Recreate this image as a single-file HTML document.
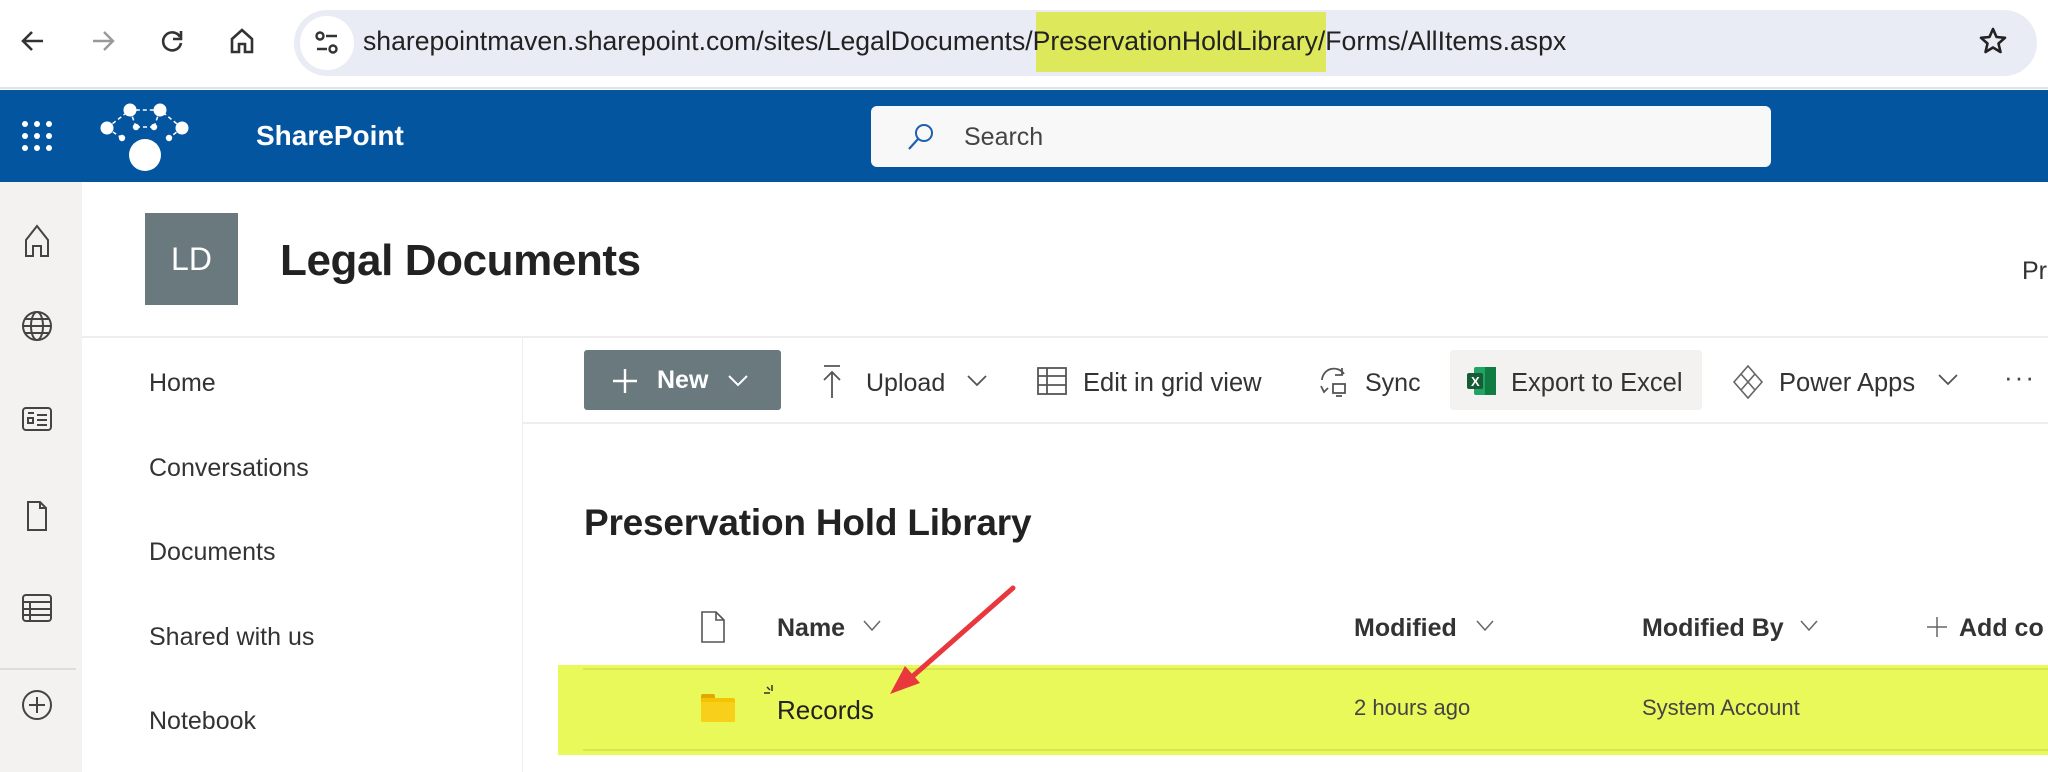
<!DOCTYPE html>
<html><head><meta charset="utf-8"><style>
*{margin:0;padding:0;box-sizing:border-box}
body{width:2048px;height:772px;overflow:hidden;background:#fff;font-family:"Liberation Sans",sans-serif;color:#323130;position:relative}
.a{position:absolute;white-space:nowrap}
svg{position:absolute;overflow:visible}
</style></head><body>
<!-- browser bar -->
<div class="a" style="left:0;top:0;width:2048px;height:89px;background:#fff;border-bottom:2px solid #dfe3ea"></div>
<svg style="left:20px;top:28px" width="26" height="26" viewBox="0 0 26 26"><path d="M23 13H4M12 4l-9 9 9 9" fill="none" stroke="#333" stroke-width="2.6"/></svg>
<svg style="left:90px;top:28px" width="26" height="26" viewBox="0 0 26 26"><path d="M3 13h19M14 4l9 9-9 9" fill="none" stroke="#999" stroke-width="2.4"/></svg>
<svg style="left:159px;top:28px" width="26" height="26" viewBox="0 0 26 26"><path d="M21 9A9 9 0 1 0 22 15" fill="none" stroke="#333" stroke-width="2.6"/><path d="M22 3v8h-8" fill="none" stroke="#333" stroke-width="2.6"/></svg>
<svg style="left:229px;top:27px" width="26" height="28" viewBox="0 0 26 28"><path d="M3 12L13 3l10 9v13h-7v-8h-6v8H3z" fill="none" stroke="#333" stroke-width="2.6"/></svg>
<div class="a" style="left:294px;top:10px;width:1743px;height:66px;background:#e9ecf4;border-radius:33px"></div>
<div class="a" style="left:300px;top:16px;width:54px;height:54px;background:#fff;border-radius:27px"></div>
<svg style="left:314px;top:30px" width="26" height="26" viewBox="0 0 26 26"><circle cx="6" cy="6" r="3.5" fill="none" stroke="#333" stroke-width="2.4"/><path d="M12 6h11M3 19h10" stroke="#333" stroke-width="2.4"/><circle cx="19" cy="19" r="3.5" fill="none" stroke="#333" stroke-width="2.4"/></svg>
<div class="a" style="left:1036px;top:12px;width:290px;height:60px;background:#dde85a"></div>
<div class="a" style="left:363px;top:26px;font-size:26.6px;color:#222">sharepointmaven.sharepoint.com/sites/LegalDocuments/PreservationHoldLibrary/Forms/AllItems.aspx</div>
<svg style="left:1978px;top:26px" width="30" height="30" viewBox="0 0 30 30"><path d="M15 3l3.5 8 8.5.8-6.5 5.7 2 8.5L15 21.5 7.5 26l2-8.5L3 11.8l8.5-.8z" fill="none" stroke="#222" stroke-width="2.6" stroke-linejoin="round"/></svg>
<!-- suite bar -->
<div class="a" style="left:0;top:90px;width:2048px;height:92px;background:#0355a0"></div>
<svg style="left:0;top:90px" width="420" height="92">
<g fill="#fff"><circle cx="25" cy="34" r="3"/><circle cx="37" cy="34" r="3"/><circle cx="49" cy="34" r="3"/><circle cx="25" cy="46" r="3"/><circle cx="37" cy="46" r="3"/><circle cx="49" cy="46" r="3"/><circle cx="25" cy="58" r="3"/><circle cx="37" cy="58" r="3"/><circle cx="49" cy="58" r="3"/></g>
<g stroke="#fff" stroke-width="1.5" fill="none" stroke-dasharray="4 3"><path d="M107 38L130 20H160L182 38M107 38L122 48M182 38L169 48M130 20L136 37M160 20L154 37M136 37H154"/></g>
<g fill="#fff"><circle cx="145" cy="65" r="16"/><circle cx="107" cy="38" r="6.5"/><circle cx="130" cy="20" r="6.5"/><circle cx="160" cy="20" r="6.5"/><circle cx="182" cy="38" r="6.5"/><circle cx="122" cy="48" r="3.2"/><circle cx="136" cy="37" r="3.2"/><circle cx="154" cy="37" r="3.2"/><circle cx="169" cy="48" r="3.2"/></g>
</svg>
<div class="a" style="left:256px;top:120px;font-size:28px;font-weight:bold;color:#fff">SharePoint</div>
<div class="a" style="left:871px;top:106px;width:900px;height:61px;background:#f8f8f8;border-radius:6px"></div>
<svg style="left:906px;top:122px" width="30" height="30" viewBox="0 0 30 30"><circle cx="18" cy="11" r="8" fill="none" stroke="#1f5fb0" stroke-width="2"/><path d="M12 17L3 27" stroke="#1f5fb0" stroke-width="2.2"/></svg>
<div class="a" style="left:964px;top:123px;font-size:25px;color:#444">Search</div>
<!-- left rail -->
<div class="a" style="left:0;top:182px;width:82px;height:590px;background:#f3f2f1"></div>
<svg style="left:0;top:182px" width="82" height="590" fill="none" stroke="#444" stroke-width="2">
<path d="M26 58L37 44l11 14v16h-7v-10h-8v10h-7z"/>
<circle cx="37" cy="144" r="14"/><ellipse cx="37" cy="144" rx="6" ry="14"/><path d="M23 144h28M25 137h24M25 151h24"/>
<rect x="23" y="226" width="28" height="22" rx="3"/><rect x="28" y="236" width="5" height="5"/><path d="M37 233h10M37 238h10M37 243h10M28 231h6"/>
<path d="M28 342v-22h12l6 6v22H28z M40 320v6h6"/>
<rect x="23" y="413" width="28" height="26" rx="3"/><path d="M23 420h28M23 427h28M23 433h28M30 420v19"/>
<path d="M0 487h76" stroke="#ddd"/>
<circle cx="37" cy="523" r="14"/><path d="M37 515v16M29 523h16"/>
</svg>
<!-- site header -->
<div class="a" style="left:145px;top:213px;width:93px;height:92px;background:#69797e;color:#fff;font-size:32px;line-height:92px;text-align:center">LD</div>
<div class="a" style="left:280px;top:236px;font-size:44px;font-weight:bold;color:#222;letter-spacing:-0.4px">Legal Documents</div>
<div class="a" style="left:2022px;top:257px;font-size:25px;color:#333">Pr</div>
<div class="a" style="left:82px;top:336px;width:1966px;height:2px;background:#eeeeee"></div>
<div class="a" style="left:522px;top:338px;width:1px;height:434px;background:#eeeeee"></div>
<!-- left nav -->
<div class="a" style="left:149px;top:369px;font-size:25px;color:#333">Home</div>
<div class="a" style="left:149px;top:454px;font-size:25px;color:#333">Conversations</div>
<div class="a" style="left:149px;top:538px;font-size:25px;color:#333">Documents</div>
<div class="a" style="left:149px;top:623px;font-size:25px;color:#333">Shared with us</div>
<div class="a" style="left:149px;top:707px;font-size:25px;color:#333">Notebook</div>
<!-- command bar -->
<div class="a" style="left:584px;top:350px;width:197px;height:60px;background:#69797e;border-radius:3px"></div>
<svg style="left:612px;top:368px" width="160" height="26" fill="none" stroke="#fff" stroke-width="2.4"><path d="M13 1v24M1 13h24"/><path d="M117 8l9 9 9-9" stroke-width="2"/></svg>
<div class="a" style="left:657px;top:366px;font-size:25px;font-weight:bold;color:#fff">New</div>
<svg style="left:820px;top:364px" width="200" height="34" fill="none" stroke="#555" stroke-width="1.8"><path d="M4 2h16M12 34V8M4 16l8-8 8 8"/><path d="M148 12l9 9 9-9"/></svg>
<div class="a" style="left:866px;top:369px;font-size:25px;color:#333">Upload</div>
<svg style="left:1036px;top:366px" width="32" height="30" fill="none" stroke="#555" stroke-width="1.8"><rect x="2" y="2" width="28" height="26"/><path d="M2 10h28M2 19h28M11 2v26"/></svg>
<div class="a" style="left:1083px;top:369px;font-size:25.5px;color:#333">Edit in grid view</div>
<svg style="left:1316px;top:364px" width="36" height="34" fill="none" stroke="#555" stroke-width="1.8"><path d="M6 16a12 12 0 0 1 22-6M26 4v7h-7"/><path d="M5 22l3 6 4-4"/><rect x="17" y="20" width="12" height="9"/><path d="M20 32h6"/></svg>
<div class="a" style="left:1365px;top:369px;font-size:25px;color:#333">Sync</div>
<div class="a" style="left:1450px;top:350px;width:252px;height:60px;background:#f3f2f1;border-radius:3px"></div>
<svg style="left:1466px;top:365px" width="32" height="32"><rect x="8" y="2" width="22" height="28" rx="2" fill="#21a366"/><rect x="19" y="2" width="11" height="28" fill="#107c41"/><rect x="1" y="8" width="16" height="16" rx="2" fill="#185c37"/><text x="5" y="21" font-size="13" font-family="Liberation Sans" fill="#fff" font-weight="bold">X</text></svg>
<div class="a" style="left:1511px;top:369px;font-size:25.5px;color:#333">Export to Excel</div>
<svg style="left:1732px;top:365px" width="32" height="34" fill="none" stroke="#666" stroke-width="1.6"><path d="M16 1l14 16-14 16L2 17z"/><path d="M9 9l14 16M23 9L9 25"/></svg>
<div class="a" style="left:1779px;top:369px;font-size:25.5px;color:#333">Power Apps</div>
<svg style="left:1938px;top:374px" width="20" height="12" fill="none" stroke="#555" stroke-width="1.8"><path d="M1 1l9 9 9-9"/></svg>
<div class="a" style="left:2004px;top:362px;font-size:26px;color:#444;letter-spacing:2px">···</div>
<div class="a" style="left:523px;top:422px;width:1525px;height:2px;background:#eeeeee"></div>
<!-- library -->
<div class="a" style="left:584px;top:502px;font-size:37px;font-weight:bold;color:#222;letter-spacing:-0.2px">Preservation Hold Library</div>
<svg style="left:700px;top:610px" width="26" height="34" fill="none" stroke="#555" stroke-width="1.6"><path d="M2 32V2h14l8 8v22z M16 2v8h8"/></svg>
<div class="a" style="left:777px;top:614px;font-size:25px;font-weight:bold;color:#333">Name</div>
<div class="a" style="left:1354px;top:614px;font-size:25px;font-weight:bold;color:#333">Modified</div>
<div class="a" style="left:1642px;top:614px;font-size:25px;font-weight:bold;color:#333">Modified By</div>
<svg style="left:0;top:0" width="2048" height="772" fill="none" stroke="#666" stroke-width="1.5"><path d="M864 621l8 9 8-9M1477 621l8 9 8-9M1801 621l8 9 8-9"/><path d="M1937 617v20M1927 627h20"/></svg>
<div class="a" style="left:1959px;top:614px;font-size:25px;font-weight:bold;color:#333">Add co</div>
<!-- row -->
<div class="a" style="left:558px;top:665px;width:1490px;height:90px;background:#eaf95a"></div>
<div class="a" style="left:583px;top:668px;width:1465px;height:2px;background:#d9e650"></div>
<div class="a" style="left:583px;top:749px;width:1465px;height:2px;background:#d9e650"></div>
<svg style="left:701px;top:694px" width="36" height="30"><rect x="0" y="0" width="14" height="8" rx="2" fill="#e0a800"/><rect x="0" y="4" width="34" height="24" rx="2" fill="#f5c300"/><rect x="0" y="8" width="34" height="20" rx="2" fill="#f8cf1a"/></svg>
<svg style="left:762px;top:683px" width="16" height="16" stroke="#333" stroke-width="1.5"><path d="M2 10h6M10 2v6M5 4l3 3"/></svg>
<div class="a" style="left:777px;top:695px;font-size:26px;color:#222">Records</div>
<div class="a" style="left:1354px;top:695px;font-size:22px;color:#444">2 hours ago</div>
<div class="a" style="left:1642px;top:695px;font-size:22px;color:#444">System Account</div>
<!-- arrow -->
<svg style="left:0;top:0" width="2048" height="772"><path d="M1013 588L905 683" stroke="#e8373d" stroke-width="5" stroke-linecap="round"/><path d="M890 694l30-11-15-17z" fill="#e8373d"/></svg>
</body></html>
